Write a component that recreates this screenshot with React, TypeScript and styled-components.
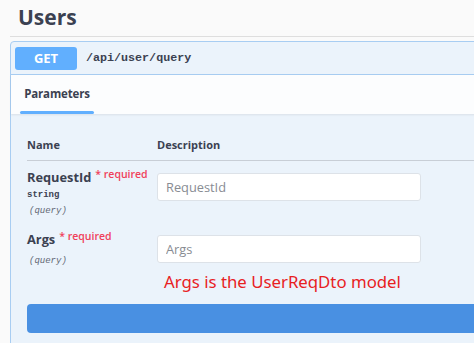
import React from "react";
import styled, { createGlobalStyle } from "styled-components";

const Global = createGlobalStyle`
  html, body { margin: 0; padding: 0; background: #fafafa; overflow: hidden; }
  body { font-family: "Open Sans", "Noto Sans", sans-serif; color: #3b4151; }
  * { box-sizing: border-box; }
`;

const Page = styled.div`
  width: 540px;
  height: 343px;
  padding-left: 10px;
`;

const TagHeader = styled.h3`
  margin: 0;
  height: 37px;
  padding: 0 0 0 8px;
  font-size: 21px;
  font-weight: 700;
  line-height: 34px;
  color: #3b4151;
  border-bottom: 1px solid #dedede;
`;

const OpBlock = styled.div`
  margin-top: 4px;
  border: 1px solid #a8cdf2;
  border-radius: 4px 0 0 0;
  background: #ebf3fb;
  height: 320px;
`;

const Summary = styled.div`
  display: flex;
  align-items: center;
  height: 33px;
  padding: 0 4px;
  border-bottom: 1px solid #a8cdf2;
`;

const Method = styled.span`
  width: 62px;
  height: 23px;
  border-radius: 3px;
  background: #61affe;
  color: #fff;
  font-size: 13px;
  font-weight: 700;
  display: flex;
  align-items: center;
  justify-content: center;
`;

const Path = styled.span`
  margin-left: 9px;
  font-family: "Liberation Mono", "DejaVu Sans Mono", monospace;
  font-weight: 700;
  font-size: 11.7px;
  color: #3b4151;
`;

const SectionHeader = styled.div`
  height: 39px;
  background: #fcfdfe;
  box-shadow: 0 1px 2px rgba(0, 0, 0, 0.08);
  padding-left: 9px;
  display: flex;
  align-items: stretch;
`;

const Tab = styled.div`
  position: relative;
  width: 74px;
  display: flex;
  align-items: center;
  justify-content: center;
  font-size: 11.5px;
  font-weight: 700;
  letter-spacing: -0.15px;
  color: #3b4151;
  padding-bottom: 2px;
  &::after {
    content: "";
    position: absolute;
    left: 0;
    right: 0;
    bottom: 0;
    height: 3px;
    background: #61affe;
    border-radius: 2px;
  }
`;

const Params = styled.div`
  padding: 0 0 0 16px;
`;

const HeadRow = styled.div`
  display: grid;
  grid-template-columns: 130px 1fr;
  height: 47px;
  align-items: end;
  padding-bottom: 8px;
  border-bottom: 1px solid #c8ced6;
  font-size: 11px;
  font-weight: 700;
  color: #3b4151;
`;

const Row = styled.div<{ $pt: number; $mt: number }>`
  display: grid;
  grid-template-columns: 130px 1fr;
  align-items: start;
  padding-top: ${(p) => p.$pt}px;
  margin-top: ${(p) => p.$mt}px;
`;

const NameCell = styled.div`
  display: flex;
  flex-direction: column;
`;

const ParamName = styled.div`
  font-size: 12.8px;
  font-weight: 700;
  color: #3b4151;
  line-height: 20px;
  white-space: nowrap;
`;

const Required = styled.span`
  position: relative;
  top: -4px;
  margin-left: 4px;
  font-size: 10.5px;
  font-weight: 600;
  color: #f0405a;
`;

const TypeText = styled.div`
  font-family: "Liberation Mono", "DejaVu Sans Mono", monospace;
  font-weight: 700;
  font-size: 9px;
  line-height: 14px;
  color: #3b4151;
`;

const InText = styled.div<{ $mt: number }>`
  font-family: "Liberation Mono", "DejaVu Sans Mono", monospace;
  font-style: italic;
  font-size: 9px;
  line-height: 14px;
  color: #626875;
  margin-top: ${(p) => p.$mt}px;
  padding-left: 2px;
`;

const DescCell = styled.div<{ $mt: number }>`
  display: flex;
  flex-direction: column;
  padding-top: ${(p) => p.$mt}px;
`;

const Input = styled.input`
  width: 264px;
  height: 28px;
  border: 1px solid #dde2e8;
  border-radius: 3px;
  background: #fff;
  padding: 0 8px;
  font-family: "Open Sans", "Noto Sans", sans-serif;
  font-size: 12.8px;
  outline: none;
  &::placeholder { color: #888c93; }
`;

const Note = styled.div`
  margin: 8px 0 0 7px;
  font-family: "Noto Sans", "Open Sans", sans-serif;
  font-size: 16.8px;
  line-height: 22px;
  color: #e8211f;
`;

const Execute = styled.div`
  margin-top: 11px;
  height: 29px;
  border-radius: 4px 0 0 4px;
  background: #4990e2;
`;

export default function App() {
  return (
    <>
      <Global />
      <Page>
        <TagHeader>Users</TagHeader>
        <OpBlock>
          <Summary>
            <Method>GET</Method>
            <Path>/api/user/query</Path>
          </Summary>
          <SectionHeader>
            <Tab>Parameters</Tab>
          </SectionHeader>
          <Params>
            <HeadRow>
              <div>Name</div>
              <div>Description</div>
            </HeadRow>
            <Row $pt={6} $mt={0}>
              <NameCell>
                <ParamName>
                  RequestId<Required>* required</Required>
                </ParamName>
                <TypeText>string</TypeText>
                <InText $mt={2}>(query)</InText>
              </NameCell>
              <DescCell $mt={6}>
                <Input placeholder="RequestId" />
              </DescCell>
            </Row>
            <Row $pt={0} $mt={11}>
              <NameCell>
                <ParamName>
                  Args<Required>* required</Required>
                </ParamName>
                <InText $mt={4}>(query)</InText>
              </NameCell>
              <DescCell $mt={6}>
                <Input placeholder="Args" />
                <Note>Args is the UserReqDto model</Note>
              </DescCell>
            </Row>
            <Execute />
          </Params>
        </OpBlock>
      </Page>
    </>
  );
}
